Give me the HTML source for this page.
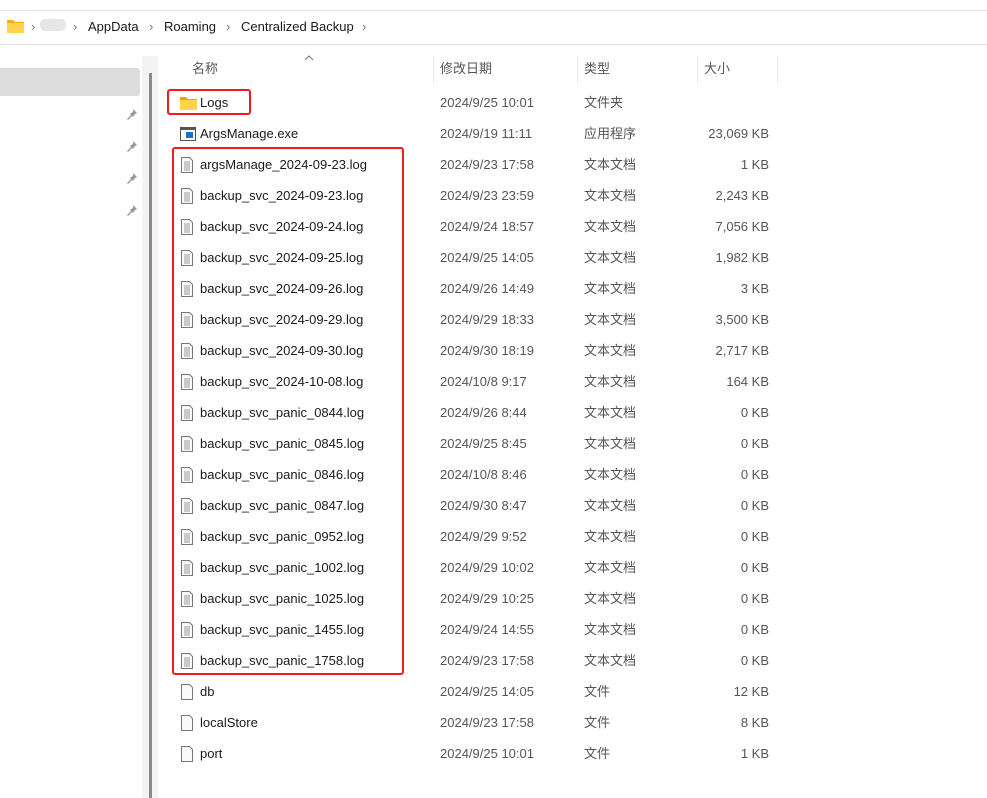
<!DOCTYPE html>
<html><head><meta charset="utf-8"><style>
body{margin:0;width:987px;height:798px;background:#fff;font-family:"Segoe UI","Liberation Sans","Noto Sans CJK SC",sans-serif;font-size:13px;color:#1a1a1a;position:relative;overflow:hidden}
.a{position:absolute;line-height:16px}
.row{position:absolute;left:0;height:31px;width:987px}
.row span{position:absolute;top:0;line-height:31px;height:31px;white-space:nowrap}
.n{left:200px}.d{left:440px;color:#555}.t{left:584px;color:#555}.s{right:218px;color:#555}
.ic{position:absolute;left:181px;top:8px}
.h{position:absolute;top:60px;line-height:18px;color:#555}
.pin{position:absolute;left:126px}
</style></head><body>
<div class="a" style="left:0;top:10px;width:987px;height:1px;background:#e5e5e5"></div>
<div class="a" style="left:0;top:44px;width:987px;height:1px;background:#e5e5e5"></div>
<svg class="a" style="left:7px;top:19px" width="17" height="14"><path d="M0 1h6l2 2h9v11H0z" fill="#f0b400"/><rect x="0" y="4" width="17" height="10" fill="#ffd34d"/></svg>
<div class="a" style="left:31px;top:19px;color:#777">›</div>
<div class="a" style="left:40px;top:19px;width:26px;height:12px;background:#e6e6e6;border-radius:5px"></div>
<div class="a" style="left:73px;top:19px;color:#777">›</div>
<div class="a" style="left:88px;top:19px">AppData</div>
<div class="a" style="left:149px;top:19px;color:#777">›</div>
<div class="a" style="left:164px;top:19px">Roaming</div>
<div class="a" style="left:226px;top:19px;color:#777">›</div>
<div class="a" style="left:241px;top:19px">Centralized Backup</div>
<div class="a" style="left:362px;top:19px;color:#777">›</div>
<div class="a" style="left:0;top:68px;width:140px;height:28px;background:#dcdcdc;border-radius:0 3px 3px 0"></div>
<svg class="pin" style="top:108px" width="12" height="12"><path d="M7 1l4 4-2 1-2 3-1-1-4 4-1-1 4-4-1-1 3-2z" fill="#999"/></svg>
<svg class="pin" style="top:140px" width="12" height="12"><path d="M7 1l4 4-2 1-2 3-1-1-4 4-1-1 4-4-1-1 3-2z" fill="#999"/></svg>
<svg class="pin" style="top:172px" width="12" height="12"><path d="M7 1l4 4-2 1-2 3-1-1-4 4-1-1 4-4-1-1 3-2z" fill="#999"/></svg>
<svg class="pin" style="top:204px" width="12" height="12"><path d="M7 1l4 4-2 1-2 3-1-1-4 4-1-1 4-4-1-1 3-2z" fill="#999"/></svg>
<div class="a" style="left:142px;top:56px;width:16px;height:742px;background:#f3f3f3"></div>
<div class="a" style="left:149px;top:73px;width:3px;height:725px;background:#8a8a8a"></div>
<svg class="a" style="left:304px;top:55px" width="10" height="6"><path d="M1 5l4-4 4 4" fill="none" stroke="#777"/></svg>
<div class="h" style="left:192px">名称</div>
<div class="a" style="left:433px;top:56px;width:1px;height:27px;background:#e5e5e5"></div>
<div class="h" style="left:440px">修改日期</div>
<div class="a" style="left:577px;top:56px;width:1px;height:27px;background:#e5e5e5"></div>
<div class="h" style="left:584px">类型</div>
<div class="a" style="left:697px;top:56px;width:1px;height:27px;background:#e5e5e5"></div>
<div class="h" style="left:704px">大小</div>
<div class="a" style="left:777px;top:56px;width:1px;height:27px;background:#e5e5e5"></div>
<div id="rows"></div>
<div class="a" style="left:167px;top:89px;width:80px;height:22px;border:2px solid #f01c1c;border-radius:3px"></div>
<div class="a" style="left:172px;top:147px;width:228px;height:524px;border:2px solid #f01c1c;border-radius:3px"></div>
<script>
var R=[["Logs","2024/9/25 10:01","文件夹","","f"],["ArgsManage.exe","2024/9/19 11:11","应用程序","23,069 KB","e"],
["argsManage_2024-09-23.log","2024/9/23 17:58","文本文档","1 KB","l"],
["backup_svc_2024-09-23.log","2024/9/23 23:59","文本文档","2,243 KB","l"],
["backup_svc_2024-09-24.log","2024/9/24 18:57","文本文档","7,056 KB","l"],
["backup_svc_2024-09-25.log","2024/9/25 14:05","文本文档","1,982 KB","l"],
["backup_svc_2024-09-26.log","2024/9/26 14:49","文本文档","3 KB","l"],
["backup_svc_2024-09-29.log","2024/9/29 18:33","文本文档","3,500 KB","l"],
["backup_svc_2024-09-30.log","2024/9/30 18:19","文本文档","2,717 KB","l"],
["backup_svc_2024-10-08.log","2024/10/8 9:17","文本文档","164 KB","l"],
["backup_svc_panic_0844.log","2024/9/26 8:44","文本文档","0 KB","l"],
["backup_svc_panic_0845.log","2024/9/25 8:45","文本文档","0 KB","l"],
["backup_svc_panic_0846.log","2024/10/8 8:46","文本文档","0 KB","l"],
["backup_svc_panic_0847.log","2024/9/30 8:47","文本文档","0 KB","l"],
["backup_svc_panic_0952.log","2024/9/29 9:52","文本文档","0 KB","l"],
["backup_svc_panic_1002.log","2024/9/29 10:02","文本文档","0 KB","l"],
["backup_svc_panic_1025.log","2024/9/29 10:25","文本文档","0 KB","l"],
["backup_svc_panic_1455.log","2024/9/24 14:55","文本文档","0 KB","l"],
["backup_svc_panic_1758.log","2024/9/23 17:58","文本文档","0 KB","l"],
["db","2024/9/25 14:05","文件","12 KB","b"],["localStore","2024/9/23 17:58","文件","8 KB","b"],["port","2024/9/25 10:01","文件","1 KB","b"]];
var I={f:'<svg class="ic" style="left:180px;top:9px" width="17" height="14"><path d="M0 1h6l2 2h9v11H0z" fill="#e8a800"/><rect y="4" width="17" height="10" fill="#ffd34d"/></svg>',
e:'<svg class="ic" style="left:180px;top:9px" width="16" height="14"><rect x=".5" y=".5" width="15" height="13" fill="#fff" stroke="#555"/><rect x="1" y="1" width="14" height="2" fill="#555"/><rect x="6" y="5" width="7" height="6" fill="#1a6fd0"/></svg>',
l:'<svg class="ic" width="12" height="16"><path d="M.5 .5h8l3 3v12H.5z" fill="#fafafa" stroke="#777"/><path d="M3 5h6M3 7h6M3 9h6M3 11h6M3 13h6" stroke="#999"/></svg>',
b:'<svg class="ic" width="12" height="16"><path d="M.5 .5h8l3 3v12H.5z" fill="#fafafa" stroke="#777"/></svg>'};
var h="";R.forEach(function(r,i){h+='<div class="row" style="top:'+(87+31*i)+'px">'+I[r[4]]+'<span class="n">'+r[0]+'</span><span class="d">'+r[1]+'</span><span class="t">'+r[2]+'</span><span class="s">'+r[3]+'</span></div>'});
document.getElementById("rows").innerHTML=h;
</script>
</body></html>
